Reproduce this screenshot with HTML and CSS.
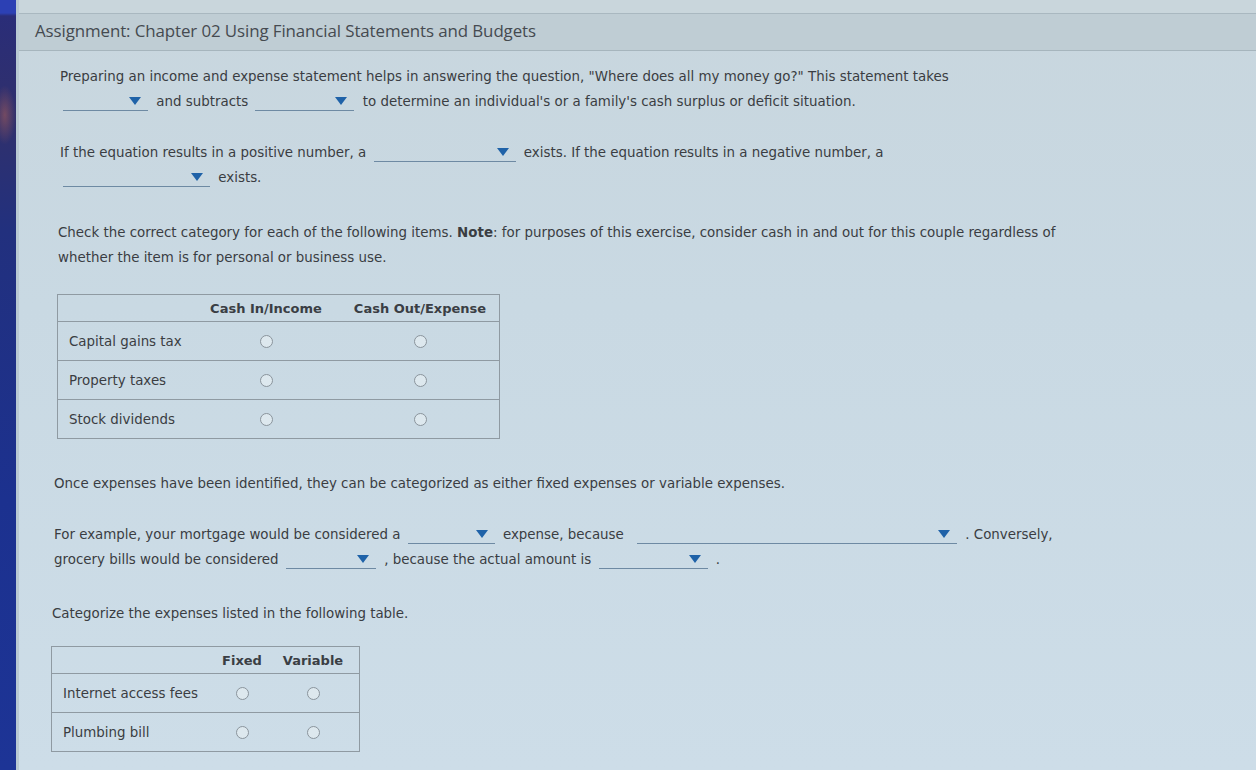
FILE: index.html
```html
<!DOCTYPE html>
<html>
<head>
<meta charset="utf-8">
<link rel="stylesheet" href="styles.css">
</head>
<body>
<div class="screen">
  <div class="sidebar"><div class="glow"></div></div>
  <div class="main">
    <div class="topstrip"></div>
    <div class="titlebar"><h1 class="title">Assignment: Chapter 02 Using Financial Statements and Budgets</h1></div>
    <div class="content">
      <p class="para p1">Preparing an income and expense statement helps in answering the question, "Where does all my money go?" This statement takes<br>
        <span class="dd w85"><span class="tri"></span></span> and subtracts <span class="dd w99"><span class="tri"></span></span> to determine an individual's or a family's cash surplus or deficit situation.</p>

      <p class="para p2">If the equation results in a positive number, a <span class="dd w142"><span class="tri"></span></span> exists. If the equation results in a negative number, a<br>
        <span class="dd w147"><span class="tri"></span></span> exists.</p>

      <p class="para p3">Check the correct category for each of the following items. <b>Note</b>: for purposes of this exercise, consider cash in and out for this couple regardless of<br>whether the item is for personal or business use.</p>

      <table class="grid t1">
        <tr class="head"><th class="c1"></th><th class="c2">Cash In/Income</th><th class="c3">Cash Out/Expense</th></tr>
        <tr><td class="c1">Capital gains tax</td><td><span class="radio"></span></td><td class="c3"><span class="radio"></span></td></tr>
        <tr><td class="c1">Property taxes</td><td><span class="radio"></span></td><td class="c3"><span class="radio"></span></td></tr>
        <tr><td class="c1">Stock dividends</td><td><span class="radio"></span></td><td class="c3"><span class="radio"></span></td></tr>
      </table>

      <p class="para p4">Once expenses have been identified, they can be categorized as either fixed expenses or variable expenses.</p>

      <p class="para p5">For example, your mortgage would be considered a <span class="dd w87"><span class="tri"></span></span> expense, because <span class="dd w320 gap"><span class="tri"></span></span> . Conversely,<br>
        grocery bills would be considered <span class="dd w90"><span class="tri"></span></span> , because the actual amount is <span class="dd w109"><span class="tri"></span></span> .</p>

      <p class="para p6">Categorize the expenses listed in the following table.</p>

      <table class="grid t2">
        <tr class="head"><th class="d1"></th><th class="d2">Fixed</th><th class="d3">Variable</th></tr>
        <tr><td class="d1">Internet access fees</td><td><span class="radio"></span></td><td><span class="radio"></span></td></tr>
        <tr><td class="d1">Plumbing bill</td><td><span class="radio"></span></td><td><span class="radio"></span></td></tr>
      </table>
    </div>
  </div>
</div>
</body>
</html>
```
FILE: styles.css
```css
html, body {
  margin: 0;
  padding: 0;
  height: 100%;
  overflow: hidden;
}
body {
  background: #c9d9e3;
  font-family: Verdana, "DejaVu Sans", sans-serif;
  color: #3a3d42;
}
.screen {
  display: flex;
  height: 770px;
  width: 1256px;
}
.sidebar {
  width: 16px;
  flex: none;
  position: relative;
  background: linear-gradient(180deg, #2c40b4 0px, #2c40b4 13px, #2a2d78 16px, #30306c 120px, #22307e 230px, #1c318f 500px, #1d3496 770px);
  border-right: 3px solid #b9c9d3;
}
.glow {
  position: absolute;
  left: 0;
  top: 85px;
  width: 16px;
  height: 60px;
  background: radial-gradient(ellipse at 30% 50%, rgba(170,95,90,0.55), rgba(170,95,90,0) 70%);
}
.main {
  flex: 1;
  display: flex;
  flex-direction: column;
  background: linear-gradient(180deg, #c8d6de 0%, #c9d9e3 40%, #cddde8 100%);
}
.topstrip {
  height: 13px;
  background: #c9d6dc;
  border-bottom: 1px solid #a9b8c0;
}
.titlebar {
  height: 36px;
  background: #bfcdd4;
  border-bottom: 1px solid #a6b5bd;
  display: flex;
  align-items: center;
  padding-left: 16px;
}
.title {
  margin: 0;
  font-family: "Open Sans", sans-serif;
  font-weight: 400;
  font-size: 16.9px;
  color: #454a50;
  letter-spacing: -0.1px;
  line-height: 22px;
  padding-bottom: 3px;
}
.content {
  padding-left: 41px;
}
.para {
  margin: 0;
  font-size: 13.4px;
  line-height: 25px;
}
.p1 { padding-top: 13px; }
.p2 { margin-top: 26px; }
.p3 { margin-top: 30px; margin-left: -2px; }
.p4 { margin-top: 32px; margin-left: -6px; }
.p5 { margin-top: 26px; margin-left: -6px; }
.p6 { margin-top: 29px; margin-left: -8px; }
.dd {
  display: inline-block;
  vertical-align: -5px;
  height: 16px;
  border-bottom: 1px solid #6e8aa3;
  position: relative;
  margin: 0 4px 0 3px;
}
.dd.gap { margin-left: 9px; }
.tri {
  position: absolute;
  right: 7px;
  top: 3px;
  width: 0;
  height: 0;
  border-left: 6px solid transparent;
  border-right: 6px solid transparent;
  border-top: 8px solid #1f62a8;
}
.w85 { width: 85px; }
.w99 { width: 99px; }
.w142 { width: 142px; }
.w147 { width: 147px; }
.w87 { width: 87px; }
.w320 { width: 320px; }
.w90 { width: 90px; }
.w109 { width: 109px; }
.grid {
  border-collapse: collapse;
  font-size: 13.4px;
  border: 1px solid #8f9aa2;
  table-layout: fixed;
}
.grid th {
  font-weight: 700;
  height: 26px;
  padding: 0;
  text-align: center;
  font-size: 13px;
  color: #3a3e44;
  white-space: nowrap;
}
.grid td {
  height: 38px;
  padding: 0;
  text-align: center;
  border-top: 1px solid #8f9aa2;
}
.grid td.c1, .grid td.d1 {
  text-align: left;
  padding-left: 11px;
}
.grid .c3 { padding-left: 10px; }
.t1 { margin-top: 24px; margin-left: -3px; }
.c1 { width: 132px; }
.c2 { width: 130px; }
.c3 { width: 158px; }
.t2 { margin-top: 20px; margin-left: -9px; }
.d1 { width: 154px; }
.d2 { width: 50px; }
.d3 { width: 92px; }
.radio {
  display: inline-block;
  width: 11px;
  height: 11px;
  border: 1px solid #8a949c;
  border-radius: 50%;
  background: #dde8ee;
  vertical-align: middle;
}
```
